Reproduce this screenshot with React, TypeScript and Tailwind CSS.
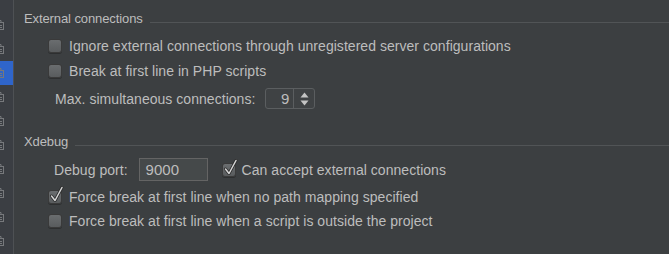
import React from "react";

function SideIcon() {
  return (
    <svg width="10" height="10" viewBox="0 0 10 10" className="-ml-[6px]">
      <rect x="1.5" y="2.5" width="8" height="7" fill="none" stroke="#77797c" strokeWidth="1" />
      <path d="M4 0.5h3v2" fill="none" stroke="#77797c" strokeWidth="1" />
      <path d="M3 5.5h5M3 7.5h5" stroke="#77797c" strokeWidth="1" />
    </svg>
  );
}

function Checkbox({ checked }: { checked?: boolean }) {
  return (
    <div className="relative w-[14px] h-[14px] shrink-0 rounded-[3px] border border-[#3a3a3a] bg-gradient-to-b from-[#6a6d6f] to-[#595c5e] shadow-[0_1px_0_#2d2f30]">
      {checked && (
        <svg width="16" height="17" viewBox="0 0 16 17" className="absolute -top-[5px] left-[0px]">
          <path d="M2.5 10l3.5 4.5 7-13" fill="none" stroke="#2a2a2a" strokeWidth="3" strokeLinecap="round" strokeLinejoin="round" />
          <path d="M2.5 10l3.5 4.5 7-13" fill="none" stroke="#d6d6d6" strokeWidth="1.5" strokeLinecap="round" strokeLinejoin="round" />
        </svg>
      )}
    </div>
  );
}

function CheckRow({ label, checked, className }: { label: string; checked?: boolean; className?: string }) {
  return (
    <div className={"flex items-center gap-[7px] pl-[24px] " + (className ?? "")}>
      <Checkbox checked={checked} />
      <span>{label}</span>
    </div>
  );
}

function Section({ title, className }: { title: string; className?: string }) {
  return (
    <div className={"flex items-center h-[20px] gap-[7px] text-[13px] tracking-[-0.1px] " + (className ?? "")}>
      <span>{title}</span>
      <div className="flex-1 h-px mt-[8px] bg-[#515456]" />
    </div>
  );
}

export default function App() {
  return (
    <div
      className="w-[669px] h-[254px] flex bg-[#3c3f41] text-[#bdbdbd] text-[14px] tracking-[0.04px] leading-none overflow-hidden"
      style={{ fontFamily: '"Liberation Sans", Arial, sans-serif' }}
    >
      {/* left tree strip */}
      <div className="w-[14px] shrink-0 bg-[#3b3e43] border-r border-[#4e5154] flex flex-col pt-[13px]">
        {Array.from({ length: 10 }).map((_, i) => (
          <div
            key={i}
            className={"h-[24px] flex items-center " + (i === 2 ? "bg-[#2f65ca]" : "")}
          >
            <SideIcon />
          </div>
        ))}
      </div>

      <div className="flex-1 flex flex-col pl-[10px] pt-[8px]">
        <Section title="External connections" />

        <CheckRow className="h-[25px] mt-[5px]" label="Ignore external connections through unregistered server configurations" />
        <CheckRow className="h-[25px]" label="Break at first line in PHP scripts" />

        <div className="h-[25px] mt-[3px] flex items-center pl-[31px]">
          <span>Max. simultaneous connections:</span>
          <div className="ml-[10px] w-[50px] h-[21px] flex rounded-[3px] border border-[#5b5e60] bg-[#3f4244]">
            <div className="flex-1 flex items-center justify-end pr-[4px] text-[15px]">9</div>
            <div className="w-[21px] border-l border-[#5b5e60] flex flex-col items-center justify-center gap-[2px]">
              <svg width="9" height="6" viewBox="0 0 9 6"><path d="M0.5 5.5L4.5 0.5L8.5 5.5Z" fill="#c4c4c4" /></svg>
              <svg width="9" height="6" viewBox="0 0 9 6"><path d="M0.5 0.5L4.5 5.5L8.5 0.5Z" fill="#c4c4c4" /></svg>
            </div>
          </div>
        </div>

        <Section title="Xdebug" className="mt-[20px]" />

        <div className="h-[25px] mt-[6px] flex items-center pl-[30px]">
          <span>Debug port:</span>
          <div className="ml-[11px] w-[69px] h-[23px] flex items-center pl-[6px] border border-[#646464] bg-[#45494a] text-[15px]">
            9000
          </div>
          <div className="ml-[14px] flex items-center gap-[6px]">
            <Checkbox checked />
            <span>Can accept external connections</span>
          </div>
        </div>

        <CheckRow className="h-[24px] mt-[3px]" checked label="Force break at first line when no path mapping specified" />
        <CheckRow className="h-[24px]" label="Force break at first line when a script is outside the project" />
      </div>
    </div>
  );
}
